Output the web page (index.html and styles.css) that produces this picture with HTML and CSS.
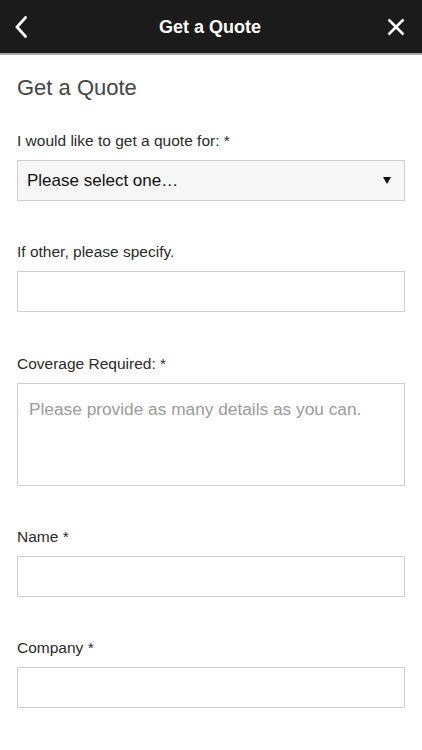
FILE: index.html
```html
<!DOCTYPE html>
<html lang="en">
<head>
<meta charset="utf-8">
<title>Get a Quote</title>
<link rel="stylesheet" href="styles.css">
</head>
<body>
<header class="topbar">
  <button class="icon-btn" aria-label="Back">
    <svg width="12" height="22" viewBox="0 0 12 22"><path d="M10.5 1.5 L2 11 L10.5 20.5" fill="none" stroke="#fff" stroke-width="2.8" stroke-linecap="square" stroke-linejoin="miter"/></svg>
  </button>
  <h1 class="topbar-title">Get a Quote</h1>
  <button class="icon-btn" aria-label="Close">
    <svg width="18" height="18" viewBox="0 0 18 18"><path d="M1.5 1.5 L16.5 16.5 M16.5 1.5 L1.5 16.5" fill="none" stroke="#fff" stroke-width="2.6"/></svg>
  </button>
</header>
<main class="content">
  <h2 class="page-title">Get a Quote</h2>
  <div class="field">
    <label class="label">I would like to get a quote for: *</label>
    <div class="select">
      <span>Please select one…</span>
      <span class="caret"></span>
    </div>
  </div>
  <div class="field">
    <label class="label">If other, please specify.</label>
    <div class="input"></div>
  </div>
  <div class="field">
    <label class="label">Coverage Required: *</label>
    <div class="textarea"><span class="placeholder">Please provide as many details as you can.</span></div>
  </div>
  <div class="field">
    <label class="label">Name *</label>
    <div class="input"></div>
  </div>
  <div class="field">
    <label class="label">Company *</label>
    <div class="input"></div>
  </div>
</main>
</body>
</html>
```
FILE: styles.css
```css
* { box-sizing: border-box; }
html, body { margin: 0; padding: 0; background: #fff; }
body {
  font-family: "Liberation Sans", Arial, sans-serif;
  color: #2b2b2b;
  width: 422px;
  height: 750px;
  overflow: hidden;
}
.topbar {
  height: 55px;
  background: #1b1b1b;
  border-bottom: 2px solid #a8a8a8;
  display: flex;
  align-items: center;
  justify-content: space-between;
  padding: 0 17px 0 15px;
}
.icon-btn {
  background: none;
  border: 0;
  padding: 0;
  width: 20px;
  height: 24px;
  display: flex;
  align-items: center;
  justify-content: center;
}
.icon-btn:first-child { justify-content: flex-start; }
.icon-btn:last-child { justify-content: flex-end; }
.topbar-title {
  margin: 0;
  color: #fff;
  font-size: 18px;
  font-weight: bold;
  line-height: 22px;
}
.content {
  padding: 20px 17px 0 17px;
}
.page-title {
  margin: 0 0 30px 0;
  font-size: 22px;
  font-weight: normal;
  line-height: 26px;
  color: #454545;
}
.field { margin-bottom: 41.3px; }
.label {
  display: block;
  font-size: 15.5px;
  line-height: 20px;
  color: #2b2b2b;
  margin-bottom: 9px;
}
.select, .input, .textarea {
  width: 100%;
  border: 1.5px solid #cfcfcf;
  background: #fff;
}
.select {
  height: 41px;
  background: #f6f6f6;
  display: flex;
  align-items: center;
  justify-content: space-between;
  padding: 0 13px 0 9px;
  font-size: 17px;
  color: #111;
}
.caret {
  width: 0;
  height: 0;
  border-left: 4px solid transparent;
  border-right: 4px solid transparent;
  border-top: 7px solid #111;
}
.input { height: 41px; }
.textarea {
  height: 103px;
  padding: 14px 11px;
  font-size: 17.3px;
  line-height: 22px;
}
.placeholder { color: #9b9b9b; }
```
